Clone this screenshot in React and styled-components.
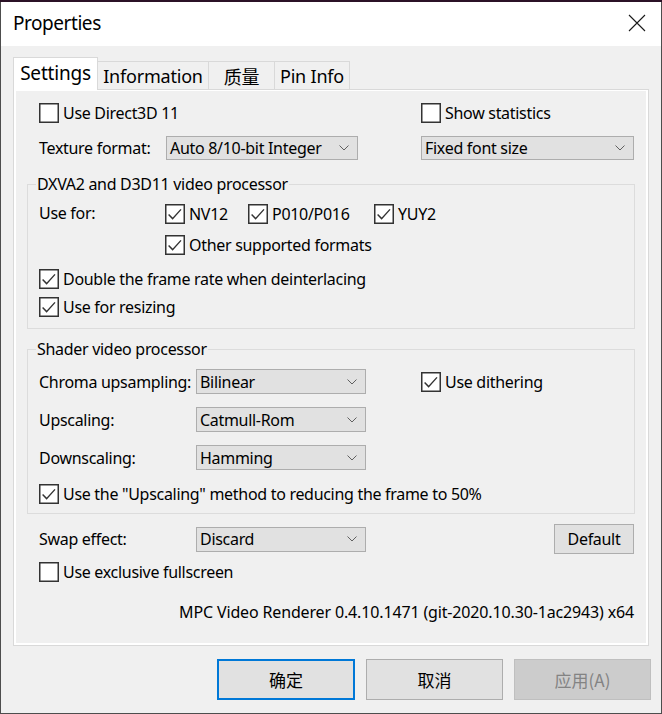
import React from "react";
import styled, { createGlobalStyle } from "styled-components";

const Global = createGlobalStyle`
  html, body { margin: 0; padding: 0; background: #2b1126; }
  body { font-family: "Noto Sans", "Noto Sans CJK SC", sans-serif; color: #000; }
  #root { width: 662px; height: 714px; overflow: hidden; }
  * { box-sizing: border-box; }
`;

const Window = styled.div`
  margin-top: 2px;
  height: 712px;
  border: 1px solid #4d4d4d;
  border-top: none;
  background: #f0f0f0;
  display: flex;
  flex-direction: column;
`;

const TitleBar = styled.div`
  height: 44px;
  background: #fff;
  display: flex;
  align-items: center;
  justify-content: space-between;
  padding: 0 15px 2px 12px;
`;

const Title = styled.div`
  font-size: 19px;
  letter-spacing: -0.45px;
`;

const Body = styled.div`
  flex: 1;
  padding: 12px 13px 0 12px;
  display: flex;
  flex-direction: column;
`;

const TabStrip = styled.div`
  display: flex;
  align-items: flex-end;
  height: 32px;
  margin-bottom: -1px;
  position: relative;
  z-index: 1;
`;

const Tab = styled.div`
  width: ${(p) => p.$w}px;
  height: ${(p) => (p.$active ? 33 : 29)}px;
  margin-left: ${(p) => (p.$first ? 0 : -1)}px;
  border: 1px solid #d9d9d9;
  border-bottom: ${(p) => (p.$active ? "none" : "1px solid #d9d9d9")};
  background: ${(p) => (p.$active ? "#fff" : "#f0f0f0")};
  display: flex;
  align-items: center;
  justify-content: center;
  font-size: ${(p) => (p.$active ? 19 : 18)}px;
  letter-spacing: -0.2px;
  padding-bottom: ${(p) => (p.$active ? 3 : 0)}px;
  z-index: ${(p) => (p.$active ? 2 : 1)};
`;

const Panel = styled.div`
  width: 636px;
  height: 557px;
  border: 1px solid #d9d9d9;
  background: #fff;
  padding: 1px 2px 2px 2px;
  display: flex;
`;

const Page = styled.div`
  flex: 1;
  background: #f0f0f0;
  padding: 12px 11px 0 11px;
  display: flex;
  flex-direction: column;
  font-size: 16px;
  letter-spacing: -0.3px;
`;

const Row = styled.div`
  display: grid;
  grid-template-columns: ${(p) => p.$cols || "1fr"};
  align-items: center;
  height: ${(p) => p.$h || 20}px;
  margin-top: ${(p) => p.$mt || 0}px;
  padding-left: ${(p) => (p.$pl ?? 12)}px;
`;

const Label = styled.span`
  white-space: nowrap;
  line-height: 20px;
`;

const CheckWrap = styled.label`
  display: flex;
  align-items: center;
  gap: 4px;
  white-space: nowrap;
  line-height: 20px;
`;

const Check = ({ checked, children }) => (
  <CheckWrap>
    <svg width="20" height="20" viewBox="0 0 20 20">
      <rect x="0.75" y="0.75" width="18.5" height="18.5" fill="#fff" stroke="#333" strokeWidth="1.5" />
      {checked && (
        <polyline points="3.6,10.4 7.6,14.6 16,5.4" fill="none" stroke="#333" strokeWidth="1.4" />
      )}
    </svg>
    <span>{children}</span>
  </CheckWrap>
);

const SelectBox = styled.div`
  width: ${(p) => p.$w}px;
  height: ${(p) => p.$h || 25}px;
  background: #e1e1e1;
  border: 1px solid #adadad;
  display: flex;
  align-items: center;
  justify-content: space-between;
  padding: 0 8px 0 3px;
  white-space: nowrap;
`;

const Select = ({ w, h, children }) => (
  <SelectBox $w={w} $h={h}>
    <span>{children}</span>
    <svg width="10" height="6" viewBox="0 0 10 6">
      <polyline points="0.5,0.5 5,5 9.5,0.5" fill="none" stroke="#606060" strokeWidth="1" />
    </svg>
  </SelectBox>
);

const Group = styled.fieldset`
  margin: ${(p) => p.$mt || 0}px 0 0 0;
  padding: 0 0 ${(p) => p.$pb || 12}px 0;
  border: 1px solid #dcdcdc;
  min-width: 0;
  display: flex;
  flex-direction: column;
`;

const Legend = styled.legend`
  margin-left: 8px;
  padding: 0 1px;
  line-height: 20px;
  height: 20px;
`;

const FormatGrid = styled.div`
  display: grid;
  grid-template-columns: 126px 83px 126px 1fr;
  grid-template-rows: 20px 20px;
  row-gap: 11px;
  align-items: center;
  padding-left: 11px;
  margin-top: 10px;
`;

const UseFor = styled.span`
  line-height: 20px;
  margin-top: -3px;
`;

const Cell = styled.div`
  grid-column: ${(p) => p.$col};
  grid-row: ${(p) => p.$row};
  display: flex;
`;

const PlainButton = styled.div`
  width: ${(p) => p.$w}px;
  height: ${(p) => p.$h}px;
  background: ${(p) => (p.$disabled ? "#cccccc" : "#e1e1e1")};
  border: ${(p) => (p.$primary ? "2px solid #0078d7" : p.$disabled ? "1px solid #bfbfbf" : "1px solid #adadad")};
  color: ${(p) => (p.$disabled ? "#838383" : "#000")};
  display: flex;
  align-items: center;
  justify-content: center;
  font-size: ${(p) => p.$fs || 16}px;
  justify-self: end;
`;

const SwapRow = styled.div`
  display: grid;
  grid-template-columns: 157px 170px 1fr;
  align-items: center;
  height: 30px;
  margin-top: 10px;
  padding-left: 12px;
  padding-right: 1px;
`;

const Version = styled.div`
  text-align: right;
  line-height: 20px;
  margin-top: 20px;
  padding-right: 1px;
  white-space: nowrap;
  letter-spacing: -0.15px;
`;

const ButtonBar = styled.div`
  display: flex;
  justify-content: flex-end;
  gap: 11px;
  margin-top: 13px;
  margin-right: -3px;
  font-family: "Noto Sans CJK SC", "Noto Sans", sans-serif;
`;

const CloseIcon = () => (
  <svg width="18" height="18" viewBox="0 0 18 18">
    <path d="M1 1 L17 17 M17 1 L1 17" stroke="#1a1a1a" strokeWidth="1.1" fill="none" />
  </svg>
);

export default function App() {
  return (
    <>
      <Global />
      <Window>
        <TitleBar>
          <Title>Properties</Title>
          <CloseIcon />
        </TitleBar>
        <Body>
          <TabStrip>
            <Tab $w={85} $active $first>Settings</Tab>
            <Tab $w={112}>Information</Tab>
            <Tab $w={67}>质量</Tab>
            <Tab $w={76}>Pin Info</Tab>
          </TabStrip>
          <Panel>
            <Page>
              <Row $cols="382px 1fr">
                <Check>Use Direct3D 11</Check>
                <Check>Show statistics</Check>
              </Row>
              <Row $cols="127px 255px 1fr" $h={24} $mt={13}>
                <Label>Texture format:</Label>
                <Select w={192} h={24}>Auto 8/10-bit Integer</Select>
                <Select w={213} h={24}>Fixed font size</Select>
              </Row>

              <Group $mt={14} $pb={11}>
                <Legend>DXVA2 and D3D11 video processor</Legend>
                <FormatGrid>
                  <Cell $col={1} $row={1}><UseFor>Use for:</UseFor></Cell>
                  <Cell $col={2} $row={1}><Check checked>NV12</Check></Cell>
                  <Cell $col={3} $row={1}><Check checked>P010/P016</Check></Cell>
                  <Cell $col={4} $row={1}><Check checked>YUY2</Check></Cell>
                  <Cell $col="2 / 5" $row={2}><Check checked>Other supported formats</Check></Cell>
                </FormatGrid>
                <Row $mt={14} $pl={11}>
                  <Check checked>Double the frame rate when deinterlacing</Check>
                </Row>
                <Row $mt={8} $pl={11}>
                  <Check checked>Use for resizing</Check>
                </Row>
              </Group>

              <Group $mt={10} $pb={9}>
                <Legend>Shader video processor</Legend>
                <Row $cols="157px 225px 1fr" $h={25} $mt={10} $pl={11}>
                  <Label>Chroma upsampling:</Label>
                  <Select w={170}>Bilinear</Select>
                  <Check checked>Use dithering</Check>
                </Row>
                <Row $cols="157px 1fr" $h={25} $mt={13} $pl={11}>
                  <Label>Upscaling:</Label>
                  <Select w={170}>Catmull-Rom</Select>
                </Row>
                <Row $cols="157px 1fr" $h={25} $mt={13} $pl={11}>
                  <Label>Downscaling:</Label>
                  <Select w={170}>Hamming</Select>
                </Row>
                <Row $mt={14} $pl={11}>
                  <Check checked>Use the "Upscaling" method to reducing the frame to 50%</Check>
                </Row>
              </Group>

              <SwapRow>
                <Label>Swap effect:</Label>
                <Select w={170}>Discard</Select>
                <PlainButton $w={80} $h={30}>Default</PlainButton>
              </SwapRow>
              <Row $mt={8}>
                <Check>Use exclusive fullscreen</Check>
              </Row>
              <Version>MPC Video Renderer 0.4.10.1471 (git-2020.10.30-1ac2943) x64</Version>
            </Page>
          </Panel>
          <ButtonBar>
            <PlainButton $w={138} $h={41} $primary $fs={17}>确定</PlainButton>
            <PlainButton $w={137} $h={41} $fs={17}>取消</PlainButton>
            <PlainButton $w={137} $h={41} $disabled $fs={17}>应用(A)</PlainButton>
          </ButtonBar>
        </Body>
      </Window>
    </>
  );
}
